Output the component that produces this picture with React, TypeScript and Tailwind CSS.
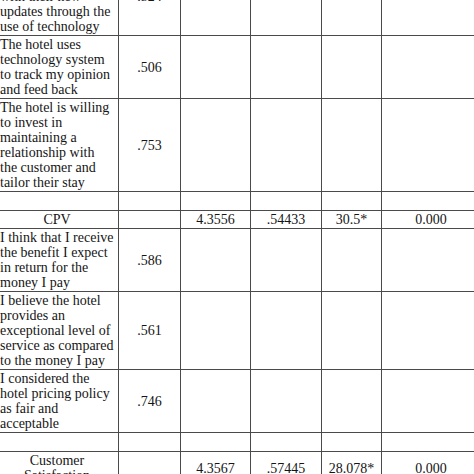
const rows: { lines: string[]; loading?: string; center?: boolean; values?: string[]; empty?: boolean }[] = [
  {
    lines: ['The hotel keeps', 'customers informed', 'with their new', 'updates through the', 'use of technology'],
    loading: '.524',
  },
  {
    lines: ['The hotel uses', 'technology system', 'to track my opinion', 'and feed back'],
    loading: '.506',
  },
  {
    lines: ['The hotel is willing', 'to invest in', 'maintaining a', 'relationship with', 'the customer and', 'tailor their stay'],
    loading: '.753',
  },
  { lines: [], empty: true },
  { lines: ['CPV'], center: true, values: ['4.3556', '.54433', '30.5*', '0.000'] },
  {
    lines: ['I think that I receive', 'the benefit I expect', 'in return for the', 'money I pay'],
    loading: '.586',
  },
  {
    lines: ['I believe the hotel', 'provides an', 'exceptional level of', 'service as compared', 'to the money I pay'],
    loading: '.561',
  },
  {
    lines: ['I considered the', 'hotel pricing policy', 'as fair and', 'acceptable'],
    loading: '.746',
  },
  { lines: [], empty: true },
  { lines: ['Customer', 'Satisfaction'], center: true, values: ['4.3567', '.57445', '28.078*', '0.000'] },
]

const cell = 'border border-[#4a4a4a] px-0 py-[1px] text-center align-middle'

export default function App() {
  return (
    <div className="w-[474px] h-[474px] overflow-hidden bg-white">
      <table
        className="-mt-[43px] -ml-[8px] border-collapse table-fixed w-[488px] text-[14px] leading-[15px] text-[#151515]"
        style={{ fontFamily: '"Liberation Serif", "DejaVu Serif", serif' }}
      >
        <colgroup>
          <col className="w-[126px]" />
          <col className="w-[62px]" />
          <col className="w-[70px]" />
          <col className="w-[71px]" />
          <col className="w-[60px]" />
          <col className="w-[99px]" />
        </colgroup>
        <tbody>
          {rows.map((r, i) => (
            <tr key={i} className={r.empty ? 'h-[19px]' : ''}>
              <td className={`border border-[#4a4a4a] py-[1px] pl-[7px] pr-[4px] align-top ${r.center ? 'text-center' : 'text-left'}`}>
                {r.lines.map((l, j) => (
                  <div key={j} className="whitespace-nowrap">{l}</div>
                ))}
              </td>
              <td className={cell}>{r.loading}</td>
              <td className={cell}>{r.values?.[0]}</td>
              <td className={cell}>{r.values?.[1]}</td>
              <td className={cell}>{r.values?.[2]}</td>
              <td className={cell}>{r.values?.[3]}</td>
            </tr>
          ))}
        </tbody>
      </table>
    </div>
  )
}
